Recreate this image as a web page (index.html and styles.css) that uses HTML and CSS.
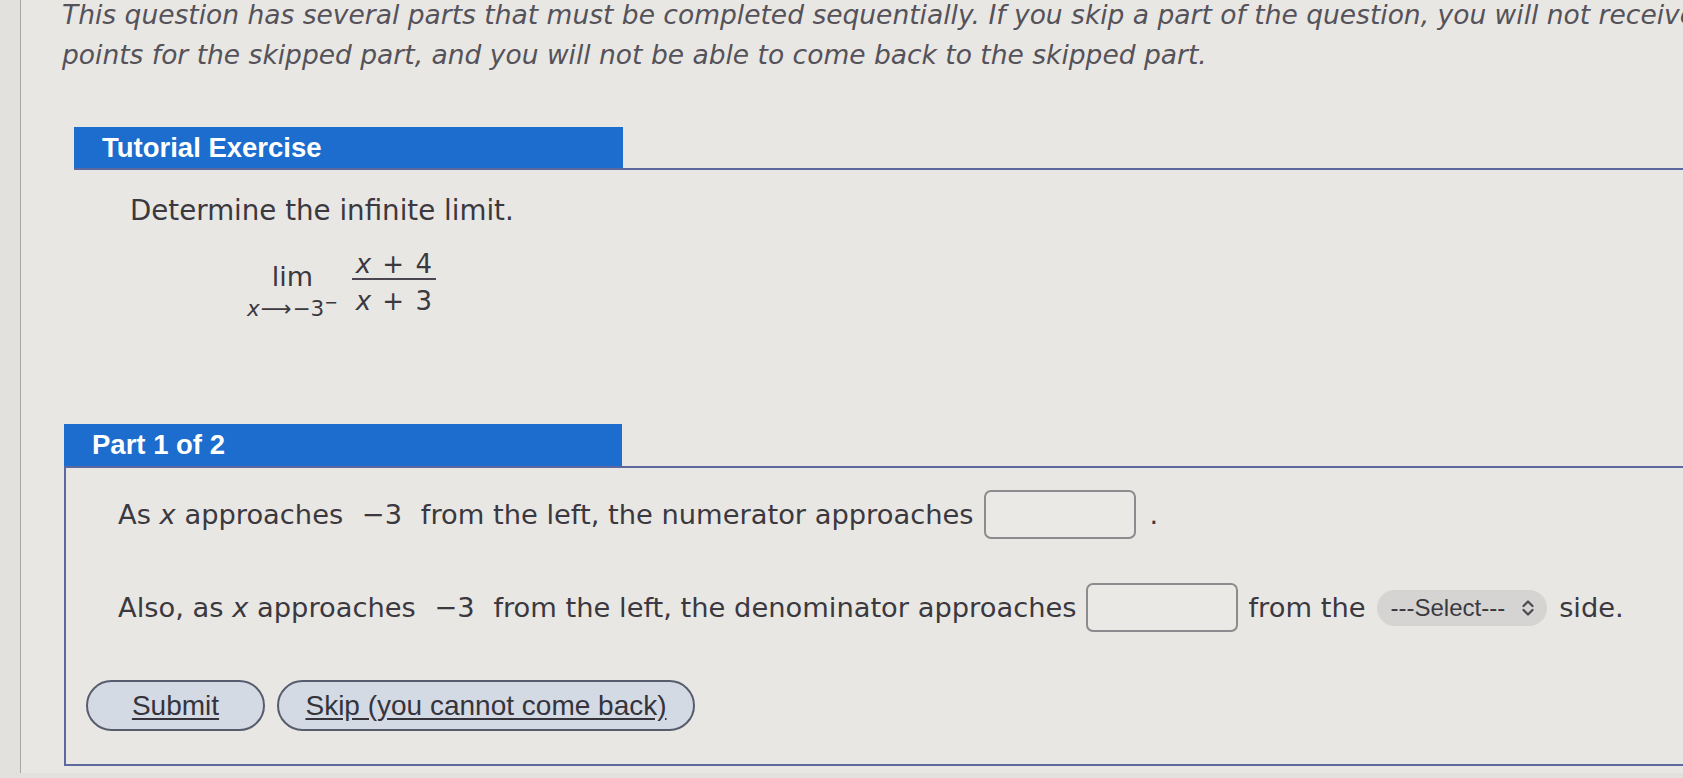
FILE: index.html
```html
<!DOCTYPE html>
<html lang="en">
<head>
<meta charset="utf-8">
<title>Tutorial Exercise</title>
<link rel="stylesheet" href="styles.css">
</head>
<body>
<div class="page">
  <p class="intro">This question has several parts that must be completed sequentially. If you skip a part of the question, you will not receive any<br>points for the skipped part, and you will not be able to come back to the skipped part.</p>

  <div class="head-row tutorial-row">
    <div class="head-bar tutorial-bar">Tutorial Exercise</div>
  </div>

  <p class="prompt">Determine the infinite limit.</p>

  <div class="limit">
    <div class="lim-col">
      <span class="lim">lim</span>
      <span class="lim-sub"><i>x</i><span class="arrow">⟶</span>−3<sup>−</sup></span>
    </div>
    <div class="frac">
      <span class="num"><i>x</i> + 4</span>
      <span class="den"><i>x</i> + 3</span>
    </div>
  </div>

  <section class="part">
    <div class="head-row part-row">
      <div class="head-bar part-bar">Part 1 of 2</div>
    </div>
    <div class="part-body">
      <div class="q-row">
        <span>As <i>x</i> approaches <span class="num-val">−3</span> from the left, the numerator approaches</span>
        <span class="answer-box"></span>
        <span class="dot">.</span>
      </div>
      <div class="q-row">
        <span>Also, as <i>x</i> approaches <span class="num-val">−3</span> from the left, the denominator approaches</span>
        <span class="answer-box"></span>
        <span>from the</span>
        <div class="select">
          <span>---Select---</span>
          <svg class="chev" width="18" height="20" viewBox="0 0 18 20"><path d="M4.5 8 L9 3.5 L13.5 8 M4.5 12 L9 16.5 L13.5 12" fill="none" stroke="#4a4a50" stroke-width="2.2" stroke-linecap="round" stroke-linejoin="round"/></svg>
        </div>
        <span>side.</span>
      </div>
      <div class="btn-row">
        <button class="btn submit">Submit</button>
        <button class="btn skip">Skip (you cannot come back)</button>
      </div>
    </div>
  </section>
</div>
</body>
</html>
```

FILE: styles.css
```css
html, body {
  margin: 0;
  padding: 0;
  height: 100%;
  overflow: hidden;
}
body {
  background: #e2e1dd;
  font-family: "DejaVu Sans", Verdana, sans-serif;
  color: #3b3840;
}
.page {
  margin-left: 20px;
  border-left: 1px solid #a9a8a6;
  min-height: 100%;
  background: #e8e7e3;
  box-sizing: border-box;
}
.intro {
  margin: -5px 0 0;
  padding: 0 0 0 41px;
  font-style: italic;
  font-size: 26.5px;
  line-height: 40px;
  white-space: nowrap;
  color: #55525a;
}
.head-row {
  display: flex;
  border-bottom: 2px solid #5d67a0;
}
.head-bar {
  background: #1c6dcd;
  color: #ffffff;
  font-family: "Liberation Sans", Arial, sans-serif;
  font-weight: bold;
  font-size: 27.5px;
  height: 41px;
  line-height: 41px;
  box-sizing: border-box;
  padding-left: 28px;
}
.tutorial-row {
  margin-top: 52px;
  margin-left: 53px;
}
.tutorial-bar {
  width: 549px;
}
.prompt {
  margin: 25px 0 0 109px;
  font-size: 27.7px;
  line-height: 32px;
}
.limit {
  display: flex;
  align-items: flex-start;
  margin: 23px 0 0 226px;
}
.lim-col {
  display: flex;
  flex-direction: column;
  align-items: center;
  padding-top: 13px;
}
.lim {
  font-size: 27px;
  line-height: 28px;
}
.lim-sub {
  margin-top: 7px;
  font-size: 21.5px;
  line-height: 22px;
}
.lim-sub .arrow {
  margin: 0 1px;
}
.lim-sub sup {
  font-size: 16px;
  line-height: 0;
}
.frac {
  display: flex;
  flex-direction: column;
  align-items: stretch;
  margin-left: 14px;
  font-size: 26px;
  line-height: 28px;
  text-align: center;
  word-spacing: 3px;
}
.num {
  padding: 0 4px;
  border-bottom: 2px solid #4a4550;
}
.den {
  padding: 7px 4px 0;
}
.part {
  margin: 104px 0 0 43px;
}
.part-row {
  margin: 0;
}
.part-bar {
  width: 558px;
  height: 42px;
  line-height: 42px;
}
.part-body {
  border-left: 2px solid #5d67a0;
  border-bottom: 2px solid #5d67a0;
  padding: 22px 0 33px 52px;
  display: flex;
  flex-direction: column;
  gap: 44px;
}
.q-row {
  display: flex;
  align-items: center;
  gap: 10px;
  height: 49px;
  font-size: 27.3px;
  white-space: nowrap;
}
.num-val {
  margin: 0 10px;
}
.answer-box {
  width: 152px;
  height: 49px;
  box-sizing: border-box;
  border: 2px solid #8c8b8e;
  border-radius: 7px;
  background: #eae9e6;
}
.dot {
  margin-left: 4px;
}
.select {
  display: flex;
  align-items: center;
  gap: 14px;
  height: 36px;
  padding: 0 10px 0 13px;
  border-radius: 18px;
  background: #d5d4d2;
  font-family: "Liberation Sans", Arial, sans-serif;
  font-size: 24px;
  color: #3a3a40;
  margin: 0 2px;
}
.chev {
  display: block;
}
.btn-row {
  display: flex;
  gap: 12px;
  margin-left: -32px;
  margin-top: 4px;
}
.btn {
  height: 51px;
  border: 2px solid #585d6e;
  border-radius: 26px;
  background: #d4dae4;
  font-family: "Liberation Sans", Arial, sans-serif;
  font-size: 28px;
  color: #35343c;
  text-decoration: underline;
  text-underline-offset: 3px;
  padding: 0;
  cursor: pointer;
}
.submit {
  width: 179px;
}
.skip {
  width: 418px;
}
```
